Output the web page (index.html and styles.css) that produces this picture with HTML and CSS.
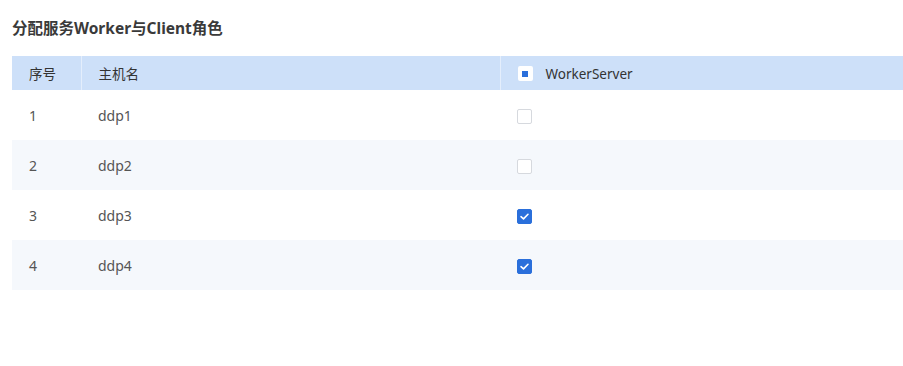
FILE: index.html
```html
<!DOCTYPE html>
<html>
<head>
<meta charset="utf-8">
<link rel="stylesheet" href="styles.css">
</head>
<body>
<div class="page">
  <h3 class="title">分配服务Worker与Client角色</h3>
  <table class="grid">
    <colgroup><col class="c1"><col class="c2"><col class="c3"></colgroup>
    <thead>
      <tr>
        <th>序号</th>
        <th>主机名</th>
        <th><span class="cb indet"></span><span class="hlabel">WorkerServer</span></th>
      </tr>
    </thead>
    <tbody>
      <tr><td>1</td><td>ddp1</td><td><span class="cb"></span></td></tr>
      <tr class="alt"><td>2</td><td>ddp2</td><td><span class="cb"></span></td></tr>
      <tr><td>3</td><td>ddp3</td><td><span class="cb on"><svg viewBox="0 0 15 15" width="15" height="15"><path d="M4 7.7 L6.5 9.9 L11 5.3" fill="none" stroke="#fff" stroke-width="1.6" stroke-linecap="round" stroke-linejoin="round"/></svg></span></td></tr>
      <tr class="alt"><td>4</td><td>ddp4</td><td><span class="cb on"><svg viewBox="0 0 15 15" width="15" height="15"><path d="M4 7.7 L6.5 9.9 L11 5.3" fill="none" stroke="#fff" stroke-width="1.6" stroke-linecap="round" stroke-linejoin="round"/></svg></span></td></tr>
    </tbody>
  </table>
</div>
</body>
</html>
```
FILE: styles.css
```css
html, body { margin: 0; padding: 0; background: #fff; }
body { font-family: "Noto Sans", "Noto Sans CJK SC", sans-serif; color: #333; }
.page { padding: 17px 0 0 12px; }
.title { margin: 0 0 17px 0; font-size: 15.5px; font-weight: 700; color: #3a3a3a; line-height: 22px; }
.grid { border-collapse: collapse; width: 891px; table-layout: fixed; font-size: 14px; }
.grid col.c1 { width: 69px; }
.grid col.c2 { width: 419px; }
.grid th { background: #cde0f9; height: 34px; padding: 0 0 0 17px; text-align: left; font-weight: 400; font-size: 13.5px; color: #333; border-left: 1px solid #e4eefc; }
.grid th:first-child { border-left: none; }
.grid td { height: 50px; padding: 0 0 0 17px; color: #555; }
.grid tr.alt td { background: #f5f8fc; }
.cb { display: inline-block; box-sizing: border-box; width: 15px; height: 15px; border: 1px solid #d6d9de; border-radius: 2px; background: #fff; vertical-align: middle; position: relative; }
.cb.indet { border: 2px solid #fff; background: #fff; }
.cb.indet::after { content: ""; position: absolute; left: 2.5px; top: 2.5px; width: 6px; height: 6px; background: #2a6fdb; }
.cb.on { background: #2a6fdb; border-color: #2a6fdb; }
.cb.on svg { position: absolute; left: -1px; top: -1px; }
.hlabel { margin-left: 13px; vertical-align: middle; }
```
